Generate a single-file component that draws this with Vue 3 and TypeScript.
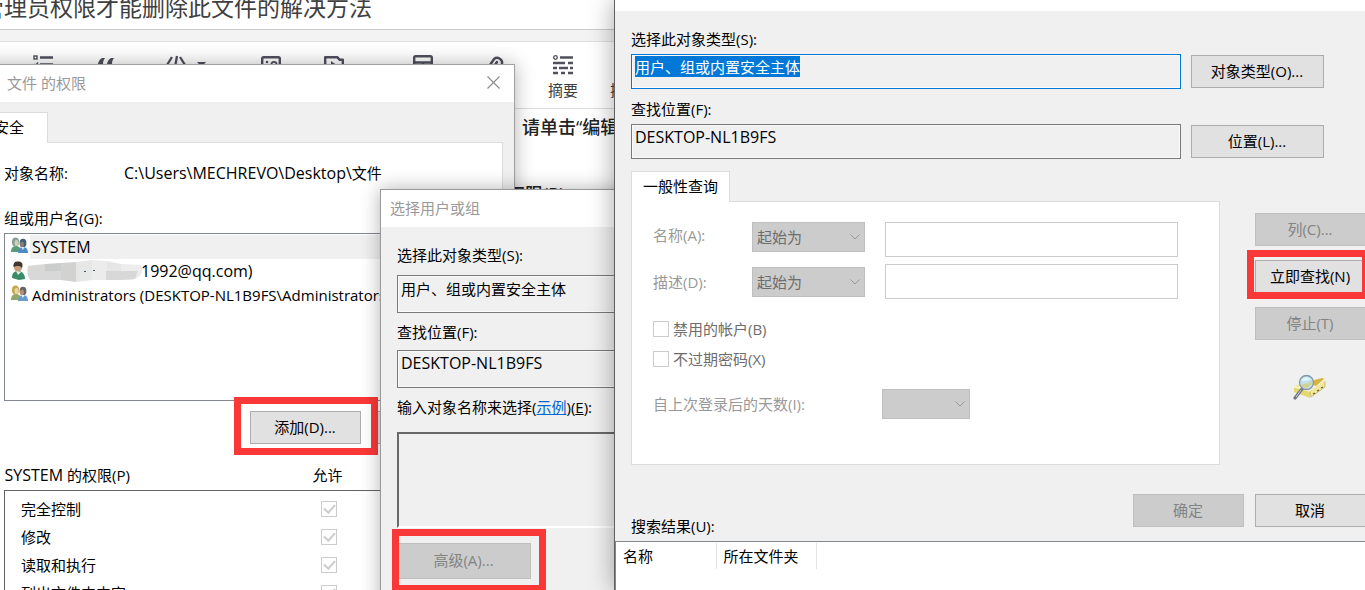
<script setup lang="ts">
import { onMounted, ref } from 'vue'

const permissions = ['完全控制', '修改', '读取和执行', '列出文件夹内容']
const typeField = ref<HTMLInputElement | null>(null)

onMounted(() => {
  typeField.value?.focus()
  typeField.value?.select()
})
</script>

<template>
  <div class="desktop">
    <main class="editor">
      <h1 class="doc-title">管理员权限才能删除此文件的解决方法</h1>
      <div class="band"></div>
      <div class="toolbar">
        <button type="button" class="tool" aria-label="list">
          <svg width="20" height="20" viewBox="0 0 20 20" fill="none" stroke="#50505f" stroke-width="2.4">
            <rect x="1" y="1" width="3" height="3" stroke-width="1.4" /><path d="M7 2.500h13M7 9.500h13M7 16.500h13" /><path d="M1 9l1.500 1.500L5 7.500" stroke-width="1.4" />
          </svg>
        </button>
        <button type="button" class="tool" aria-label="quote">
          <svg width="17" height="20" viewBox="0 0 17 20" fill="#50505f">
            <path d="M5 3h3C6.500 5 6 7 6 8.500a3 3 0 1 1-5 1C1 7 2.500 4.500 5 3zM14 3h3c-1.500 2-2 4-2 5.500a3 3 0 1 1-5 1C10 7 11.500 4.500 14 3z" />
          </svg>
        </button>
        <button type="button" class="tool" aria-label="code">
          <svg width="40" height="20" viewBox="0 0 40 20" fill="none" stroke="#50505f" stroke-width="2.300">
            <path d="M6 2L1 10l5 7M11 1L8 18M14 2l5 8-5 7" /><path d="M31 7h9l-4.500 5z" fill="#50505f" stroke="none" />
          </svg>
        </button>
        <button type="button" class="tool" aria-label="image">
          <svg width="20" height="20" viewBox="0 0 20 20" fill="none" stroke="#50505f" stroke-width="2.400">
            <rect x="1.200" y="2.200" width="17.600" height="15.600" rx="1.500" /><circle cx="6" cy="7" r="1.300" fill="#50505f" stroke="none" /><circle cx="13" cy="9.500" r="2.600" stroke-width="1.800" /><path d="M2 16l5-5 4 5" />
          </svg>
        </button>
        <button type="button" class="tool" aria-label="video">
          <svg width="20" height="20" viewBox="0 0 20 20" fill="none" stroke="#50505f" stroke-width="2.400">
            <path d="M1.200 18V2.200h12l2.500 2.600h3.100V18z" stroke-linejoin="round" /><path d="M7 6l7 5-7 4z" fill="#50505f" stroke="none" />
          </svg>
        </button>
        <button type="button" class="tool" aria-label="table">
          <svg width="20" height="20" viewBox="0 0 20 20" fill="none" stroke="#50505f" stroke-width="2.400">
            <rect x="1.200" y="1.200" width="17.600" height="17" rx="1.500" /><path d="M1 7.500h18M10 7.500v11" />
          </svg>
        </button>
        <button type="button" class="tool" aria-label="link">
          <svg width="20" height="20" viewBox="0 0 20 20" fill="none" stroke="#50505f" stroke-width="2.400" stroke-linecap="round">
            <path d="M4 10l4-6a5 5 0 0 1 8 5l-4 7M9 10l2-3" />
          </svg>
        </button>
        <button type="button" class="tool">
          <svg width="20" height="20" viewBox="0 0 20 20" fill="none" stroke="#50505f" stroke-width="2.400">
            <circle cx="2.500" cy="2.500" r="1.800" stroke-width="1.300" /><path d="M7 2.500h13M0 8h12M15 8h5M0 13h4M6 13h9M17 13h3M0 18h5M8 18h4M15 18h5" />
          </svg>
          <span>摘要</span>
        </button>
        <button type="button" class="tool last"><span>插入</span></button>
      </div>
      <p class="doc-line first">请单击“编辑</p>
      <p class="doc-line second">权限(P)</p>
    </main>

    <section class="window perms">
      <header class="titlebar">
        <span>文件 的权限</span>
        <button type="button" class="close" aria-label="close">
          <svg width="13" height="13" viewBox="0 0 13 13" stroke="#8a8a8a" stroke-width="1.100"><path d="M.5.5l12 12M12.500.5l-12 12" /></svg>
        </button>
      </header>
      <div class="perms-body">
        <div class="tab perms-tab">安全</div>
        <div class="sheet perms-sheet">
          <div class="object-row"><span>对象名称:</span><span><span class="latin">C:\Users\MECHREVO\Desktop\</span>文件</span></div>
          <div class="group-label">组或用户名(G):</div>
          <ul class="users">
            <li>
              <svg class="people" width="19" height="18" viewBox="0 0 19 18">
                <path d="M1 15c0-4 2-6 5-6s5 2 5 6z" fill="#5b9b76" /><ellipse cx="5.500" cy="5" rx="3.600" ry="4.500" fill="#8b9f98" /><ellipse cx="6.500" cy="6" rx="2" ry="3" fill="#c9d2bd" />
                <path d="M8 16c0-4 2-6 5-6s5 2 5 6z" fill="#4d8ccb" /><ellipse cx="13" cy="6" rx="3.400" ry="4.300" fill="#416078" /><ellipse cx="12" cy="7.500" rx="2" ry="2.800" fill="#8a7c72" /><path d="M11 10l2 3 1.500-3z" fill="#dce8f2" />
              </svg>
              <span class="picked latin">SYSTEM</span>
            </li>
            <li>
              <svg class="people" width="19" height="20" viewBox="0 0 19 20">
                <path d="M2 17c0-5 2-7 6-7s7 3 7 8l-6 1z" fill="#3c8b68" /><ellipse cx="8" cy="6" rx="4" ry="5" fill="#c79c7b" /><path d="M3.500 6C3 2 5 0 9 0.500c4 .5 4 4 3 6.500-2-3-6-2-8.500-1z" fill="#40352f" /><path d="M6 10l2 4 3-3z" fill="#e5efe9" />
              </svg>
              <span class="mail latin">1992@qq.com)</span>
              <svg class="smudge" width="118" height="22" viewBox="0 0 118 22">
                <path d="M2 6L19 4v16H4Q0 14 2 6z" fill="#d8d8d6" /><path d="M19 4l16-1v17H19z" fill="#cbcccc" /><path d="M35 3l15-1v20l-15-2z" fill="#d2d3d0" /><path d="M50 2l16-2v20l-16 2z" fill="#e5e8e7" /><path d="M66 0l15 1v19H66z" fill="#ececec" /><path d="M81 1l14 3v16H81z" fill="#e6e6e7" /><path d="M95 4l20 1q4 6-2 12l-8 3H95z" fill="#ededed" /><path d="M3 11h32v9H4zM80 11h15v9H80zM95 11h17l-3 8-14 1z" fill="#d9d8d9" /><path d="M58 11h2v1h-2zM67 10h2v1h-2z" fill="#456" />
              </svg>
            </li>
            <li>
              <svg class="people" width="19" height="18" viewBox="0 0 19 18">
                <path d="M1 15c0-4 2-6 5-6s5 2 5 6z" fill="#91a866" /><ellipse cx="5.500" cy="5" rx="3.600" ry="4.500" fill="#c1a94f" /><ellipse cx="6.500" cy="6" rx="2" ry="3" fill="#ead4a7" />
                <path d="M8 16c0-4 2-6 5-6s5 2 5 6z" fill="#679bcf" /><ellipse cx="13" cy="6" rx="3.400" ry="4.300" fill="#65656a" /><ellipse cx="12" cy="7.500" rx="2" ry="2.800" fill="#b58d78" /><path d="M11 10l2 3 1.500-3z" fill="#e8edf2" />
              </svg>
              <span>Administrators (DESKTOP-NL1B9FS\Administrators)</span>
            </li>
          </ul>
          <div class="perms-actions">
            <span class="marked add"><button type="button" class="btn">添加(D)...</button></span>
            <button type="button" class="btn" aria-label="remove"></button>
          </div>
          <table class="rights">
            <thead><tr><th><span class="latin">SYSTEM</span> 的权限(P)</th><th class="mid">允许</th><th></th></tr></thead>
            <tbody>
              <tr v-for="item in permissions" :key="item">
                <td>{{ item }}</td>
                <td class="mid"><input type="checkbox" class="check" checked disabled :aria-label="item"></td>
                <td></td>
              </tr>
            </tbody>
          </table>
        </div>
      </div>
    </section>

    <section class="window chooser">
      <header class="titlebar"><span>选择用户或组</span></header>
      <div class="chooser-body">
        <label for="c-type">选择此对象类型(S):</label>
        <input id="c-type" class="field" value="用户、组或内置安全主体" readonly>
        <label for="c-place">查找位置(F):</label>
        <input id="c-place" class="field latin" value="DESKTOP-NL1B9FS" readonly>
        <div class="names-label"><label for="c-names">输入对象名称来选择</label>(<a href="#">示例</a>)(<u>E</u>):</div>
        <textarea id="c-names" class="names"></textarea>
        <span class="marked advanced"><button type="button" class="btn" disabled>高级(A)...</button></span>
      </div>
    </section>

    <section class="window search">
      <div class="search-top"></div>
      <div class="search-body">
        <div class="lookup">
          <label for="s-type">选择此对象类型(S):</label>
          <input id="s-type" ref="typeField" class="field active" value="用户、组或内置安全主体" readonly>
          <button type="button" class="btn">对象类型(O)...</button>
          <label for="s-place">查找位置(F):</label>
          <input id="s-place" class="field latin" value="DESKTOP-NL1B9FS" readonly>
          <button type="button" class="btn">位置(L)...</button>
        </div>
        <div class="middle">
          <div class="query">
            <div class="tab query-tab">一般性查询</div>
            <div class="sheet query-sheet">
              <div class="criteria top">
                <label for="q-name">名称(A):</label>
                <span class="drop"><select disabled aria-label="名称"><option>起始为</option></select><svg width="10" height="6" viewBox="0 0 10 6"><path d="M.5.5L5 5 9.500.5" /></svg></span>
                <input id="q-name" class="plain" disabled>
              </div>
              <div class="criteria">
                <label for="q-desc">描述(D):</label>
                <span class="drop"><select disabled aria-label="描述"><option>起始为</option></select><svg width="10" height="6" viewBox="0 0 10 6"><path d="M.5.5L5 5 9.500.5" /></svg></span>
                <input id="q-desc" class="plain" disabled>
              </div>
              <div class="options">
                <label><input type="checkbox" class="check" disabled>禁用的帐户(B)</label>
                <label><input type="checkbox" class="check" disabled>不过期密码(X)</label>
              </div>
              <div class="days">
                <label for="q-days">自上次登录后的天数(I):</label>
                <span class="drop"><select id="q-days" disabled></select><svg width="10" height="6" viewBox="0 0 10 6"><path d="M.5.5L5 5 9.500.5" /></svg></span>
              </div>
            </div>
          </div>
          <div class="side">
            <button type="button" class="btn" disabled>列(C)...</button>
            <span class="marked find"><button type="button" class="btn">立即查找(N)</button></span>
            <button type="button" class="btn" disabled>停止(T)</button>
            <svg class="finder" width="34" height="26" viewBox="0 0 34 26">
              <path d="M1 12l14-5 17-3-12 9-4 3z" fill="#f2e9a0" /><path d="M14 8l15-4 2 1-8 7z" fill="#d8b53c" />
              <path d="M1 13l16 5v6L1 18z" fill="#e4d873" /><path d="M17 17l15-10v6L18 23z" fill="#f0e89b" stroke="#b5a94f" stroke-width=".7" /><path d="M1 13l16 4L32 7" fill="none" stroke="#fbf6c5" />
              <path d="M20 20l2-1M24 17l2-1M28 14l2-1" stroke="#5f5930" stroke-width="1.200" />
              <path d="M9 15l-7 9" stroke="#717684" stroke-width="3.200" stroke-linecap="round" /><path d="M8 16l-5 7" stroke="#d0d5dc" />
              <circle cx="13.500" cy="8.500" r="7" fill="#b9dfed" fill-opacity=".85" stroke="#8697a5" stroke-width="1.300" /><path d="M8.500 7c1-4 6-5 9-1z" fill="#e4f6fd" /><path d="M8 11c4-2 8-1 11-3-1 5-8 8-11 3z" fill="#d4cf93" />
            </svg>
          </div>
        </div>
        <div class="footer">
          <span class="results-label">搜索结果(U):</span>
          <button type="button" class="btn" disabled>确定</button>
          <button type="button" class="btn">取消</button>
        </div>
      </div>
      <div class="results">
        <table><thead><tr><th>名称</th><th>所在文件夹</th></tr></thead></table>
      </div>
    </section>
  </div>
</template>

<style>
body { margin: 0; overflow: hidden; }
</style>

<style scoped>
* { box-sizing: border-box; }
.desktop {
  position: relative;
  height: 100vh;
  overflow: hidden;
  background: #fff;
  color: #000;
  font: 15px/20px "Open Sans", "Noto Sans CJK SC", sans-serif;
}
button, input, select, textarea { font: inherit; color: inherit; margin: 0; border-radius: 0; }
h1, p, ul { margin: 0; padding: 0; font-weight: 400; }
.latin, .field.latin { font-size: 16px; }

.doc-title { height: 29px; margin-left: -19px; font-size: 23px; line-height: 14px; color: #404040; white-space: nowrap; }
.band { height: 13px; background: #f3f3f3; border-top: 1px solid #ccc; border-bottom: 1px solid #e0e0e0; }
.toolbar { display: grid; grid-template-columns: 86px 38px 123px 48px 78px 100px 46px 88px 1fr; height: 67px; padding-top: 13px; border-bottom: 1px solid #ddd; }
.tool { display: flex; flex-direction: column; align-items: center; gap: 5px; padding: 0; border: 0; background: none; color: #404040; }
.last { align-items: flex-start; padding: 25px 0 0 3px; }
.doc-line { font-size: 18px; line-height: 28px; font-weight: 500; color: #222; white-space: nowrap; }
.first { margin: 4px 0 0 522px; }
.second { margin: 39px 0 0 507px; }

.window { position: absolute; background: #f0f0f0; }
.titlebar { display: flex; align-items: center; justify-content: space-between; height: 37px; padding: 0 14px 2px 9px; background: #fff; color: #999; }
.close { display: flex; padding: 0; border: 0; background: none; }
.tab { position: relative; width: max-content; height: 31px; padding: 0 11px; line-height: 28px; background: #fff; border: 1px solid #dcdcdc; border-bottom: 0; z-index: 1; }
.sheet { margin-top: -1px; background: #fff; border: 1px solid #dcdcdc; }
.btn { display: block; height: 33px; width: 111px; padding: 0 1px 2px 0; background: #e1e1e1; border: 1px solid #adadad; text-align: center; }
.btn:disabled { background: #ccc; border-color: #bfbfbf; color: #838383; }
.marked { position: relative; display: block; width: max-content; }
.marked::after { content: ""; position: absolute; border: 7px solid #fb3838; }
.field { display: block; width: 100%; height: 38px; padding: 2px 3px 14px; background: #f0f0f0; border: 1px solid #7a7a7a; outline: 0; box-shadow: inset 0 0 0 1px #fafafa; line-height: 20px; }
.field::selection { background: #0078d7; color: #fff; }
.check { appearance: none; flex: none; display: block; width: 16px; height: 16px; border: 1px solid #ccc; background: #fff; position: relative; }
.check:checked::after { content: ""; position: absolute; left: 4px; top: 0; width: 5px; height: 9px; border: solid #ccc; border-width: 0 2px 2px 0; transform: rotate(42deg); }

.perms { left: -21px; top: 64px; bottom: -40px; width: 536px; border: 1px solid #a0a0a0; box-shadow: 0 0 18px rgba(0, 0, 0, .3); overflow: hidden; }
.perms .titlebar { padding-left: 27px; }
.perms-body { padding: 10px 11px 0 0; }
.perms-tab { padding: 0 23px 0 13px; }
.perms-sheet { padding: 20px 11px 0 23px; }
.object-row { display: grid; grid-template-columns: 120px 1fr; }
.group-label { margin: 25px 0 5px; }
.users { height: 168px; padding: 1px; border: 1px solid #828790; list-style: none; }
.users li { position: relative; display: flex; height: 24px; line-height: 24px; white-space: nowrap; overflow: hidden; }
.people { flex: none; margin: 2px 1px 0 4px; }
.users span { flex: 1; padding-left: 2px; }
.picked { background: #f0f0f0; }
.users .mail { padding-left: 111px; }
.smudge { position: absolute; left: 20px; top: 1px; }
.perms-actions { display: flex; gap: 10px; margin: 10px 0 0 246px; }
.add::after { inset: -14px -17px -11px -16px; }
.rights { width: 100%; margin-top: 21px; border-collapse: collapse; table-layout: fixed; }
.rights th { height: 25px; padding: 0 0 4px; font-weight: 400; text-align: left; line-height: 20px; }
.rights th:first-child { width: 295px; }
.rights .mid { width: 57px; padding-left: 13px; }
.rights td { height: 28px; padding: 0 0 0 16px; }
.rights td.mid { padding-left: 21px; }
.rights tbody { border: 1px solid #646464; }
.rights tbody tr:first-child td { height: 33px; padding-top: 5px; }

.chooser { left: 380px; top: 189px; bottom: -40px; width: 600px; border: 1px solid #999; box-shadow: 0 0 18px rgba(0, 0, 0, .3); }
.chooser-body { display: flex; flex-direction: column; padding: 18px 16px 0; }
.chooser-body > .field { margin: 10px 0 9px; }
.chooser-body > .field + label + .field { margin-top: 8px; }
.names-label a { color: #0066cc; }
.names { display: block; height: 96px; margin: 15px 0; background: #f0f0f0; border: 2px solid; border-color: #696969 #fff #fff #696969; resize: none; }
.advanced .btn { width: 134px; height: 36px; }
.advanced::after { inset: -14px -15px -13px -5px; }

.search { left: 614px; top: 0; right: -1px; bottom: 0; display: flex; flex-direction: column; border-left: 1px solid #606060; box-shadow: 0 0 24px rgba(0, 0, 0, .35); }
.search-top { height: 11px; background: #fff; }
.search-body { padding: 18px 0 5px 16px; }
.lookup { display: grid; grid-template-columns: 1fr 133px; column-gap: 10px; align-items: center; padding-right: 42px; }
.lookup label { grid-column: 1 / -1; margin-bottom: 5px; }
.lookup .field + .btn + label { margin-top: 10px; }
.lookup .field { height: 35px; padding-bottom: 11px; }
.lookup .active { padding: 1px 3px 12px; border-color: #0078d7; }
.lookup .btn { width: 133px; }
.middle { display: flex; gap: 35px; margin-top: 12px; }
.query { flex: 1; }
.query-sheet { padding: 20px 41px 45px 21px; color: #999; }
.criteria { display: grid; grid-template-columns: 99px 113px 1fr; align-items: center; margin-bottom: 7px; }
.criteria.top { align-items: start; }
.criteria label { line-height: 26px; }
.drop { position: relative; display: block; height: 30px; }
.drop select { display: block; appearance: none; width: 100%; height: 30px; padding: 0 4px; background: #ccc; border: 1px solid #bfbfbf; color: #6d6d6d; opacity: 1; }
.drop svg { position: absolute; right: 5px; top: 12px; fill: none; stroke: #999; }
.plain { height: 35px; width: auto; margin-left: 20px; min-width: 0; background: #fff; border: 1px solid #ccc; }
.options { display: grid; gap: 10px; margin-top: 20px; color: #6d6d6d; }
.options label { display: flex; align-items: center; gap: 4px; }
.days { display: grid; grid-template-columns: 229px 88px; align-items: center; margin-top: 20px; }
.side { display: flex; flex-direction: column; gap: 14px; width: 111px; padding-top: 42px; }
.find::after { inset: -10px -3px -6px -8px; }
.finder { align-self: center; margin: 20px 2px 0 0; }
.footer { display: flex; gap: 11px; height: 42px; margin-top: 29px; }
.results-label { margin-right: auto; align-self: flex-end; }
.results { flex: 1; padding-top: 1px; background: #fff; border: 1px solid #828790; border-width: 1px 0 0 1px; }
.results table { border-collapse: collapse; table-layout: fixed; width: 201px; }
.results th { height: 26px; padding: 0 0 0 7px; border-right: 1px solid #e5e5e5; font-weight: 400; text-align: left; white-space: nowrap; }
.results th:first-child { width: 100px; }
</style>
